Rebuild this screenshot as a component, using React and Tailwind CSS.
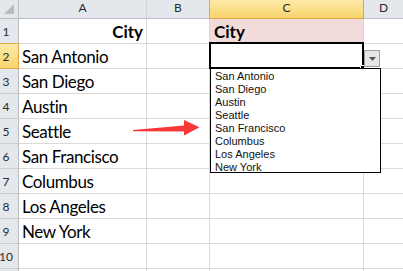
import React from "react";

const cities = ["San Antonio","San Diego","Austin","Seattle","San Francisco","Columbus","Los Angeles","New York"];

export default function App() {
  const rows = [];
  for (let r = 1; r <= 11; r++) {
    const isActive = r === 2;
    rows.push(
      <div key={"h"+r} className={`flex items-end justify-center pr-[6px] pb-[5px] text-[12px] leading-none text-[#2b2b2b] border-r ${isActive ? "bg-gradient-to-b from-[#fde9a6] to-[#f8d46c] border-r-[#e3a549] border-b border-b-[#e3a549]" : "bg-[#e4e7eb] border-r-[#b9bec5] border-b border-b-[#c9cdd3]"} ${r === 1 ? "border-b-[#e3a549]" : ""}`}>
        {r <= 10 ? r : null}
      </div>
    );
    let aContent = null;
    if (r === 1) aContent = <span className="font-bold tracking-normal">City</span>;
    else if (r >= 2 && r <= 9) aContent = cities[r-2];
    rows.push(
      <div key={"a"+r} className={`flex items-end ${r===1 ? "justify-end pr-[3px]" : "pl-[3px]"} pb-[3px] text-[17px] tracking-[-0.4px] leading-none text-black border-r border-b border-[#d9d9d9] whitespace-nowrap overflow-hidden`}>
        {aContent}
      </div>
    );
    rows.push(<div key={"b"+r} className="border-r border-b border-[#d9d9d9]" />);
    rows.push(
      <div key={"c"+r} className={`flex items-end pl-[4px] pb-[3px] text-[17px] leading-none text-black border-r border-b border-[#d9d9d9] ${r===1 ? "bg-[#f2dcdb]" : ""}`}>
        {r === 1 ? <span className="font-bold">City</span> : null}
      </div>
    );
    rows.push(<div key={"d"+r} className="border-b border-[#d9d9d9]" />);
  }

  return (
    <div className="relative w-[403px] h-[271px] overflow-hidden bg-white" style={{fontFamily: "Lato, 'Open Sans', sans-serif"}}>
      <div className="grid grid-cols-[19px_128px_63px_154px_1fr] grid-rows-[19px_repeat(11,25px)]">
        <div className="relative bg-[#e4e7eb] border-r border-b border-[#b9bec5]">
          <svg className="absolute left-0 top-0" width="18" height="18" viewBox="0 0 18 18">
            <polygon points="4,14 14,14 14,4" fill="#b7bcc3" />
          </svg>
        </div>
        <div className="flex items-end justify-center pb-[4px] text-[12px] leading-none text-[#2b2b2b] bg-[#e4e7eb] border-r border-b border-r-[#d0d4d9] border-b-[#b9bec5]">A</div>
        <div className="flex items-end justify-center pb-[4px] text-[12px] leading-none text-[#2b2b2b] bg-[#e4e7eb] border-r border-b border-r-[#e3a549] border-b-[#b9bec5]">B</div>
        <div className="flex items-end justify-center pb-[4px] text-[12px] leading-none text-[#2b2b2b] bg-gradient-to-b from-[#fde9a6] to-[#f8d46c] border-r border-b border-[#e3a549]">C</div>
        <div className="flex items-end justify-center pb-[4px] text-[12px] leading-none text-[#2b2b2b] bg-[#e4e7eb] border-b border-[#b9bec5]">D</div>
        {rows}
      </div>

      {/* active cell */}
      <div className="absolute left-[209px] top-[42px] w-[155px] h-[27px] border-2 border-black" />
      <div className="absolute left-[360px] top-[65px] w-[5px] h-[5px] bg-black border border-white" />

      {/* dropdown button */}
      <div className="absolute left-[364px] top-[50px] w-[16px] h-[17px] bg-[#e6e6e6] border border-[#a0a0a0] flex items-center justify-center">
        <svg width="7" height="4" viewBox="0 0 7 4"><polygon points="0,0 7,0 3.5,4" fill="#555" /></svg>
      </div>

      {/* dropdown list */}
      <div className="absolute left-[210px] top-[68px] w-[171px] h-[105px] bg-white border border-black pt-[1px] pl-[4px] text-[11px] leading-[13px] text-[#111]" style={{fontFamily: "'Liberation Sans', Arial, sans-serif"}}>
        {cities.map(c => <div key={c}>{c}</div>)}
      </div>

      {/* red arrow */}
      <svg className="absolute left-0 top-0" width="403" height="271" viewBox="0 0 403 271">
        <polygon points="133,130 184,125.5 184,120 199.5,127.3 184,135.5 184,131.5 133,131.3" fill="#f83838" />
      </svg>
    </div>
  );
}
